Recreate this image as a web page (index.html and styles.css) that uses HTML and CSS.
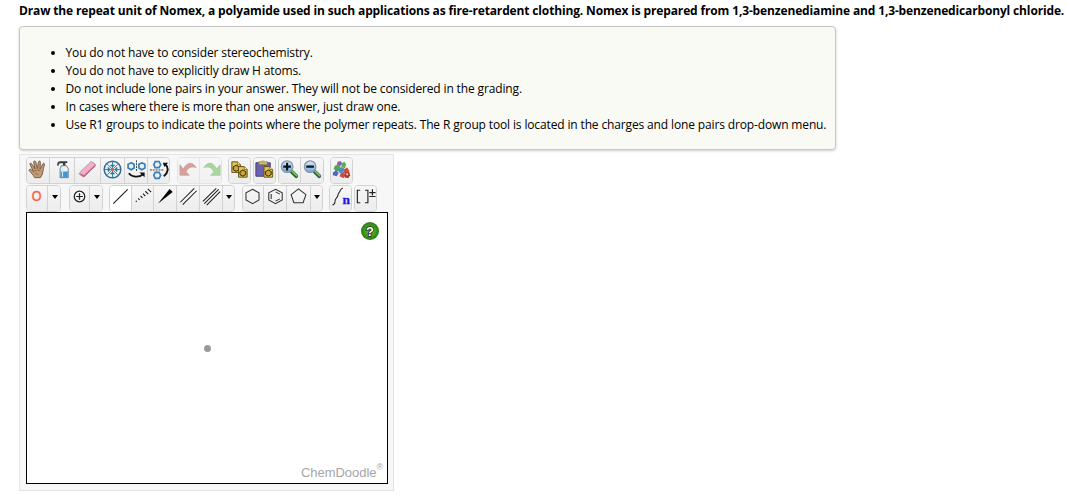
FILE: index.html
```
<!DOCTYPE html>
<html lang="en">
<head>
    <meta charset="UTF-8">
    <title>ChemDoodle Sketcher</title>
    <link rel="stylesheet" href="styles.css">
</head>
<body>
    <div class="question">Draw the repeat unit of Nomex, a polyamide used in such applications as fire-retardent clothing. Nomex is prepared from 1,3-benzenediamine and 1,3-benzenedicarbonyl chloride.</div>

    <div class="instructions">
        <ul>
            <li>You do not have to consider stereochemistry.</li>
            <li>You do not have to explicitly draw H atoms.</li>
            <li>Do not include lone pairs in your answer. They will not be considered in the grading.</li>
            <li>In cases where there is more than one answer, just draw one.</li>
            <li>Use R1 groups to indicate the points where the polymer repeats. The R group tool is located in the charges and lone pairs drop-down menu.</li>
        </ul>
    </div>

    <div class="sketcher">
        <svg class="defs" width="0" height="0">
            <defs>
                <linearGradient id="pink" x1="0" y1="0" x2="1" y2="1"><stop offset="0" stop-color="#fbd3e4"/><stop offset=".55" stop-color="#eeabc6"/><stop offset="1" stop-color="#c0708f"/></linearGradient>
                <linearGradient id="lens" x1="0" y1="0" x2="0" y2="1"><stop offset="0" stop-color="#dcecf9"/><stop offset="1" stop-color="#6ea6d8"/></linearGradient>
                <radialGradient id="help"><stop offset="0" stop-color="#5fc62f"/><stop offset=".65" stop-color="#3c9a1a"/><stop offset="1" stop-color="#2a7a13"/></radialGradient>
                <g id="doc"><path d="M1 1h6l3 3v8H1z" fill="#e3c552" stroke="#635018"/><path d="M7 1v3h3" fill="#fff0b1" stroke="#635018" stroke-width=".7"/><path d="M5.5 4.500l3 1.700v3.100L5.500 11 2.500 9.300V6.200z" fill="#c9a62e" stroke="#292308"/></g>
                <g id="loupe"><path d="M14 14l5 5" stroke="#2c6431" stroke-width="4" stroke-linecap="round"/><path d="M14.500 13.500l5 5" stroke="#86c866" stroke-width="1.600" stroke-linecap="round"/><circle cx="9.500" cy="9" r="6" fill="url(#lens)" stroke="#8296ad" stroke-width="1.300"/></g>
                <g id="rings" fill="#e3f0fa" stroke="#3a7cb4" stroke-width="1.700"><path d="M6.500 5l3 1.500v4l-3 1.800-3.300-1.800v-4z"/><path d="M17.500 5l3.300 1.500v4l-3.300 1.800-3-1.800v-4z"/></g>
            </defs>
        </svg>

        <!-- edit tools -->
        <div class="toolbar">
            <div class="group">
                <button class="btn w24"><svg viewBox="0 0 24 24"><path d="M9 20.500c-1-2.500-3.500-4.500-5.500-7.200-.9-1.400.9-2.200 2.200-1l2.300 2-3.800-7.300c-.7-1.600 1.100-2.200 1.900-.7l3.200 5.200L8 4.500c-.2-1.700 1.900-1.900 2.300-.2l1.500 6.700 1.200-6.800c.4-1.500 2.300-1.200 2 .4l-.4 7 2.800-5.400c.8-1.400 2.400-.6 1.900.8-1.900 5-1.100 10-4.300 13.500z" fill="#c39a72" stroke="#6a5340" stroke-width=".9"/><path d="M9 13.500c2-1.200 4-1.200 6 0M9.500 15.500l3.500 2" stroke="#8b6446" stroke-width=".9" fill="none"/></svg></button>
                <button class="btn w25"><svg viewBox="0 0 24 24"><path d="M6.500 8c-.3-3 .8-4.500 3.500-4.500h7v1.800h-2V8h-2.500V5.500H10C8.500 5.500 8 6.200 8 8z" fill="#343c42"/><path d="M11 8h5l2 3v9.500H9.500V11z" fill="#edf2f5" stroke="#5c6b77" stroke-width=".9"/><path d="M10 14h7.500v6H10z" fill="#3f96d2"/><path d="M12 10v9.500" stroke="#c6edfb" stroke-width="1.200"/></svg></button>
                <button class="btn w26"><svg viewBox="0 0 24 24"><path d="M3.800 15.300L14.800 4.600c.8-.8 1.500-.9 2.300-.4l2.700 2c.9.7.8 1.500 0 2.300L9 19c-.8.8-1.500.8-2.300.2l-2.800-2c-.8-.6-.9-1.200-.1-1.900z" fill="url(#pink)" stroke="#b0718a" stroke-width=".8"/><path d="M4.500 16.500l4 2.500L20 8" fill="none" stroke="#b35f82" stroke-width="1.200"/></svg></button>
                <button class="btn w24"><svg viewBox="0 0 24 24"><circle cx="12" cy="12" r="8.700" fill="#e6f5f5" stroke="#37678c" stroke-width="1.500"/><path d="M12 4v16M4 12h16M6.500 6.500l11 11m0-11l-11 11" stroke="#33809a" stroke-width="1"/><path d="M10 7l2 2 2-2m-4 10l2-2 2 2M7 10l2 2-2 2m10-4l-2 2 2 2" fill="none" stroke="#27739a" stroke-width="1.400"/><path d="M12 9.700l2.300 2.300-2.300 2.300L9.700 12z" fill="#c76865"/></svg></button>
                <button class="btn w23"><svg viewBox="0 0 24 24"><use href="#rings"/><path d="M12 2.500v12" stroke="#333" stroke-dasharray="2 1"/><path d="M4 16c3 4 10 5 15 1" fill="none" stroke="#111" stroke-width="1.800"/><path d="M15 15h5.500v5z" fill="#111"/></svg></button>
                <button class="btn w22"><svg viewBox="0 0 24 24"><g transform="matrix(0 1 1 0 1 .5)"><use href="#rings"/></g><path d="M2 12.500h14" stroke="#333" stroke-dasharray="2 1"/><path d="M16.500 19c5-4 5-9 2-12" fill="none" stroke="#111" stroke-width="2"/><path d="M15.500 5h5.500l-4 4.500z" fill="#111"/></svg></button>
            </div>
            <div class="group faded gap7">
                <button class="btn w23"><svg viewBox="0 0 24 24"><path d="M3 7v11h10l-3.500-3.500c2-5 6-6 10.500-4.500-4-6.500-9.500-6-13.500 1.500z" fill="#bb4a41" stroke="#8c4640" stroke-width=".7"/></svg></button>
                <button class="btn w22"><svg viewBox="0 0 24 24"><path d="M21 7v11H11l3.500-3.500c-2-5-6-6-10.500-4.500 4-6.500 9.500-6 13.500 1.500z" fill="#5cb848" stroke="#4b8d40" stroke-width=".7"/></svg></button>
            </div>
            <div class="group gap6">
                <button class="btn w23"><svg viewBox="0 0 24 24"><use href="#doc" x="3" y="3"/><use href="#doc" x="10" y="8"/></svg></button>
            </div>
            <div class="group gap2">
                <button class="btn w23"><svg viewBox="0 0 24 24"><path d="M3 5h15v14H3z" fill="#6962b0" stroke="#403b78"/><path d="M6 4h9v3H6z" fill="#d1c078" stroke="#78683b" stroke-width=".7"/><path d="M9 2.500h3v3H9z" fill="#c5ad62"/><use href="#doc" x="10.500" y="8"/></svg></button>
            </div>
            <div class="group gap2">
                <button class="btn w23"><svg viewBox="0 0 24 24"><use href="#loupe"/><path d="M5.500 9h8M9.500 5v8" stroke="#111" stroke-width="2.200"/></svg></button>
                <button class="btn w23"><svg viewBox="0 0 24 24"><use href="#loupe"/><path d="M5.500 9h8" stroke="#111" stroke-width="2.200"/></svg></button>
            </div>
            <div class="group gap6">
                <button class="btn w23"><svg viewBox="0 0 24 24"><path d="M4 17l3-6 6-6M9 8l1 6 6-5M13 16l5-5" fill="none" stroke="#777" stroke-width="1.200"/><path d="M8 4l3-1 2 3-3 2-3-1z" fill="#8b62ae"/><path d="M5 8l3-1 3 2-1 4-4 1-2-3z" fill="#50a94c"/><path d="M12 6l3-2 2 3-2 3-3-1z" fill="#52b248"/><path d="M3 15l4-2 2 3-2 3-4-1z" fill="#4b69bd"/><path d="M9 11l4-2 2 4-3 3-3-1z" fill="#5388d0"/><path d="M14 12l4-2 2 3-1 3-4 0z" fill="#c84f43"/><path d="M11 16l4-1 1 3-2 3-4-2z" fill="#c84f43"/><path d="M16 15l4-1 1 4-2 3-4-1z" fill="#a9372f"/><path d="M17 16h2v2h-2z" fill="#ffc1b8"/></svg></button>
            </div>
        </div>

        <!-- drawing tools -->
        <div class="toolbar drawing">
            <div class="group">
                <button class="btn w22"><svg viewBox="0 0 24 24"><text x="12" y="17" text-anchor="middle" class="label">O</text></svg></button>
                <button class="btn w13 arrow"></button>
            </div>
            <div class="group gap8">
                <button class="btn w21"><svg viewBox="0 0 24 24"><g fill="none" stroke="#222" stroke-width="1.300"><circle cx="12" cy="12" r="5.500"/><path d="M8.500 12h7M12 8.500v7"/></g></svg></button>
                <button class="btn w13 arrow"></button>
            </div>
            <div class="group gap6">
                <button class="btn w23 active"><svg viewBox="0 0 24 24"><path d="M4.500 19.500l15-15" stroke="#222" stroke-width="1.200"/></svg></button>
                <button class="btn w22"><svg viewBox="0 0 24 24"><path d="M5 16.500l1 1m1.500-3.500l1.500 1.500m1-4l2 2m.5-4.500l2.500 2.500m0-5l3 3m-.500-5.500l3.500 3.500" stroke="#222" stroke-width="1.200"/></svg></button>
                <button class="btn w23"><svg viewBox="0 0 24 24"><path d="M4 19.500L16.300 4.200l3.200 3z"/></svg></button>
                <button class="btn w23"><svg viewBox="0 0 24 24"><path d="M3.500 18L18 3.500M6 20.500L20.500 6" stroke="#222" stroke-width="1.100"/></svg></button>
                <button class="btn w23"><svg viewBox="0 0 24 24"><path d="M3 17L17 3.500M4.500 19.500L19.500 4.500M7 21L21 7" stroke="#222" stroke-width="1.100"/></svg></button>
                <button class="btn w12 arrow"></button>
            </div>
            <div class="group gap7">
                <button class="btn w22"><svg viewBox="0 0 24 24"><path d="M12 4.500l6.800 3.700v7.500L12 19.500l-6.800-3.800V8.200z" fill="none" stroke="#333" stroke-width="1.100"/></svg></button>
                <button class="btn w23"><svg viewBox="0 0 24 24"><path d="M12 4.500l7 3.700v7.500l-7 3.800-7-3.800V8.200zM7.500 9.500v5m4.500 2.300l4.500-2.300M12 7.200l4.500 2.300" fill="none" stroke="#333" stroke-width="1.100"/></svg></button>
                <button class="btn w24"><svg viewBox="0 0 24 24"><path d="M12 4l7.700 6-2.900 8.500H7.200L4.300 10z" fill="none" stroke="#333" stroke-width="1.100"/></svg></button>
                <button class="btn w12 arrow"></button>
            </div>
            <div class="group gap6">
                <button class="btn w23"><svg viewBox="0 0 24 24"><path d="M3.500 21c5-2 1-4 4-7s1-4 3-6 0-3 4-5" fill="none" stroke="#222" stroke-width="1.100"/><text x="14" y="20" class="n">n</text></svg></button>
            </div>
            <div class="group gap2">
                <button class="btn w23"><svg viewBox="0 0 24 24"><path d="M6.500 5.500h-3v13h3m5-13h3v13h-3M16 8h6.500M19.200 4.500v6.500M16 12h6.500" fill="none" stroke="#222" stroke-width="1.200"/></svg></button>
            </div>
        </div>

        <div class="canvas">
            <svg class="help" viewBox="0 0 20 20"><circle cx="10" cy="10" r="9" fill="url(#help)"/><text x="10" y="14.500" text-anchor="middle">?</text></svg>
            <span class="atom"></span>
            <span class="brand">ChemDoodle<sup>®</sup></span>
        </div>
    </div>
</body>
</html>
```
FILE: styles.css
```
body {
    margin: 0;
    padding: 2px 0 0 19px;
    background: #fff;
    color: #000;
    font-family: "Open Sans", sans-serif;
    font-size: 12px;
    letter-spacing: -0.14px;
    overflow: hidden;
}

.question {
    height: 24px;
    line-height: 18px;
    font-weight: bold;
    letter-spacing: -0.147px;
    white-space: nowrap;
}

.instructions {
    box-sizing: border-box;
    width: 817px;
    height: 124px;
    padding: 17px 0;
    border: 1px solid #c8c8c8;
    border-radius: 4px;
    background: #f9faf4;
    box-shadow: 0 1px 3px rgba(0,0,0,0.2);
}

.instructions ul {
    margin: 0;
    padding-left: 45.5px;
    line-height: 18px;
    white-space: nowrap;
}

.sketcher {
    box-sizing: border-box;
    width: 375px;
    height: 337px;
    margin-top: 4px;
    padding: 2px 6px;
    border: 1px solid #e3e3e3;
    background: #f7f7f7;
}

.defs {
    position: absolute;
}

.toolbar {
    display: flex;
    height: 27px;
}

.toolbar.drawing {
    margin-top: 1px;
}

.group {
    display: flex;
    box-sizing: border-box;
    height: 27px;
    border: 1px solid #d2d2d2;
    border-radius: 4px;
    overflow: hidden;
}

.btn {
    display: flex;
    flex: none;
    align-items: center;
    justify-content: center;
    box-sizing: border-box;
    height: 25px;
    margin: 0;
    padding: 0;
    border: 0;
    border-right: 1px solid #d2d2d2;
    background: linear-gradient(#f7f7f7, #ececec);
}

.btn:last-child {
    border-right: 0;
    margin-right: -1px;
}

.btn:first-child {
    margin-left: -1px;
}

.btn svg {
    flex: none;
    width: 23px;
    height: 23px;
    margin-bottom: 2px;
}

.drawing .btn svg {
    margin-bottom: 4px;
}

.btn.active {
    background: #fff;
}

.faded {
    opacity: 0.5;
}

.w12 { width: 12px; }
.w13 { width: 13px; }
.w21 { width: 21px; }
.w22 { width: 22px; }
.w23 { width: 23px; }
.w24 { width: 24px; }
.w25 { width: 25px; }
.w26 { width: 26px; }

.gap2 { margin-left: 2px; }
.gap6 { margin-left: 6px; }
.gap7 { margin-left: 7px; }
.gap8 { margin-left: 8px; }

/* dropdown triangles */
.arrow::after {
    content: "";
    margin-bottom: 4px;
    border: 3.5px solid transparent;
    border-top: 4px solid #000;
    border-bottom: 0;
}

.label {
    fill: #f8654a;
    stroke: #f8654a;
    stroke-width: 0.3px;
    font: 15px "DejaVu Sans Condensed", "DejaVu Sans", sans-serif;
    font-stretch: condensed;
}

.n {
    fill: #1818ee;
    stroke: #1818ee;
    stroke-width: 0.3px;
    font: bold 14px "Liberation Serif", serif;
}

.canvas {
    position: relative;
    box-sizing: border-box;
    width: 362px;
    height: 272px;
    border: 1px solid #000;
    background: #fff;
}

.help {
    position: absolute;
    top: 8px;
    right: 7px;
    width: 20px;
    height: 20px;
}

.help text {
    fill: #fff;
    stroke: #222;
    stroke-width: 1.6px;
    paint-order: stroke;
    font: bold 13px "Liberation Sans", sans-serif;
}

.atom {
    position: absolute;
    left: 177px;
    top: 132px;
    width: 7px;
    height: 7px;
    border-radius: 50%;
    background: #999;
}

.brand {
    position: absolute;
    right: 4px;
    bottom: 2px;
    color: #a5a5a5;
    font: 13px/16px "Liberation Sans", sans-serif;
    letter-spacing: -0.05px;
}

.brand sup {
    position: relative;
    top: -7px;
    font-size: 9px;
    line-height: 0;
    vertical-align: baseline;
}
```
